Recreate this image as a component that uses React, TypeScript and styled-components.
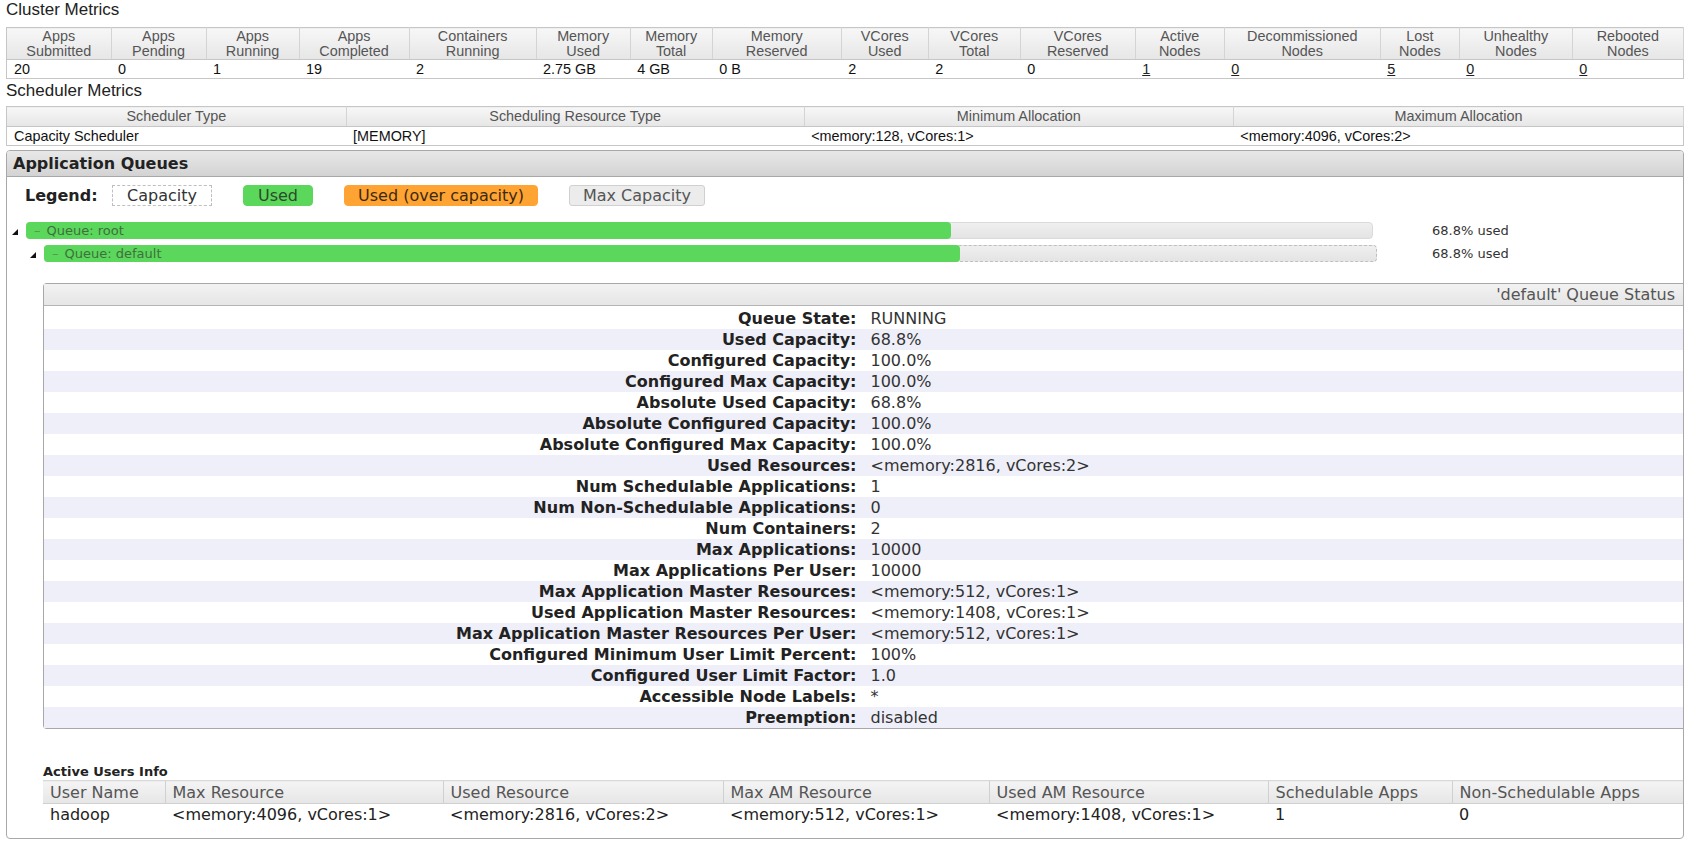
import React from 'react'
import styled, { createGlobalStyle } from 'styled-components'

const GlobalStyle = createGlobalStyle`
  html, body {
    margin: 0;
    padding: 0;
    background: #fff;
  }
  body {
    font-family: "Liberation Sans", Arial, sans-serif;
    color: #222;
  }
`

const clusterCols = [
  { h: ['Apps', 'Submitted'], v: '20', w: 104.5 },
  { h: ['Apps', 'Pending'], v: '0', w: 95 },
  { h: ['Apps', 'Running'], v: '1', w: 93 },
  { h: ['Apps', 'Completed'], v: '19', w: 110 },
  { h: ['Containers', 'Running'], v: '2', w: 127 },
  { h: ['Memory', 'Used'], v: '2.75 GB', w: 94 },
  { h: ['Memory', 'Total'], v: '4 GB', w: 82 },
  { h: ['Memory', 'Reserved'], v: '0 B', w: 129 },
  { h: ['VCores', 'Used'], v: '2', w: 87 },
  { h: ['VCores', 'Total'], v: '2', w: 92 },
  { h: ['VCores', 'Reserved'], v: '0', w: 115 },
  { h: ['Active', 'Nodes'], v: '1', w: 89, link: true },
  { h: ['Decommissioned', 'Nodes'], v: '0', w: 156, link: true },
  { h: ['Lost', 'Nodes'], v: '5', w: 79, link: true },
  { h: ['Unhealthy', 'Nodes'], v: '0', w: 113, link: true },
  { h: ['Rebooted', 'Nodes'], v: '0', w: 111, link: true },
]

const schedulerCols = [
  { h: 'Scheduler Type', v: 'Capacity Scheduler', w: 339.5 },
  { h: 'Scheduling Resource Type', v: '[MEMORY]', w: 458 },
  { h: 'Minimum Allocation', v: '<memory:128, vCores:1>', w: 429 },
  { h: 'Maximum Allocation', v: '<memory:4096, vCores:2>', w: 450 },
]

const queueStatus: [string, string][] = [
  ['Queue State:', 'RUNNING'],
  ['Used Capacity:', '68.8%'],
  ['Configured Capacity:', '100.0%'],
  ['Configured Max Capacity:', '100.0%'],
  ['Absolute Used Capacity:', '68.8%'],
  ['Absolute Configured Capacity:', '100.0%'],
  ['Absolute Configured Max Capacity:', '100.0%'],
  ['Used Resources:', '<memory:2816, vCores:2>'],
  ['Num Schedulable Applications:', '1'],
  ['Num Non-Schedulable Applications:', '0'],
  ['Num Containers:', '2'],
  ['Max Applications:', '10000'],
  ['Max Applications Per User:', '10000'],
  ['Max Application Master Resources:', '<memory:512, vCores:1>'],
  ['Used Application Master Resources:', '<memory:1408, vCores:1>'],
  ['Max Application Master Resources Per User:', '<memory:512, vCores:1>'],
  ['Configured Minimum User Limit Percent:', '100%'],
  ['Configured User Limit Factor:', '1.0'],
  ['Accessible Node Labels:', '*'],
  ['Preemption:', 'disabled'],
]

const userCols = [
  { h: 'User Name', v: 'hadoop', w: 122 },
  { h: 'Max Resource', v: '<memory:4096, vCores:1>', w: 278 },
  { h: 'Used Resource', v: '<memory:2816, vCores:2>', w: 280 },
  { h: 'Max AM Resource', v: '<memory:512, vCores:1>', w: 266 },
  { h: 'Used AM Resource', v: '<memory:1408, vCores:1>', w: 279 },
  { h: 'Schedulable Apps', v: '1', w: 184 },
  { h: 'Non-Schedulable Apps', v: '0', w: 231 },
]

const queues = [
  { name: 'root', indent: 0, width: 1347, used: 68.8, given: false },
  { name: 'default', indent: 18, width: 1333, used: 68.8, given: true },
]

const TreeArrow = () => (
  <svg width="6" height="6" viewBox="0 0 6 6">
    <polygon points="6,0 6,6 0,6" fill="#111" />
  </svg>
)

export default function App() {
  return (
    <Page>
      <GlobalStyle />
      <SectionTitle>Cluster Metrics</SectionTitle>
      <MetricsTable>
        <colgroup>
          {clusterCols.map((c, i) => (
            <col key={i} style={{ width: c.w }} />
          ))}
        </colgroup>
        <thead>
          <tr>
            {clusterCols.map((c, i) => (
              <HeadCell key={i} $tall>
                {c.h[0]}
                <br />
                {c.h[1]}
              </HeadCell>
            ))}
          </tr>
        </thead>
        <tbody>
          <tr>
            {clusterCols.map((c, i) => (
              <DataCell key={i}>{c.link ? <NodeLink>{c.v}</NodeLink> : c.v}</DataCell>
            ))}
          </tr>
        </tbody>
      </MetricsTable>

      <SectionTitle $top={2} $bottom={5}>
        Scheduler Metrics
      </SectionTitle>
      <MetricsTable>
        <colgroup>
          {schedulerCols.map((c, i) => (
            <col key={i} style={{ width: c.w }} />
          ))}
        </colgroup>
        <thead>
          <tr>
            {schedulerCols.map((c, i) => (
              <HeadCell key={i}>{c.h}</HeadCell>
            ))}
          </tr>
        </thead>
        <tbody>
          <tr>
            {schedulerCols.map((c, i) => (
              <DataCell key={i} $h={18}>
                {c.v}
              </DataCell>
            ))}
          </tr>
        </tbody>
      </MetricsTable>

      <QueuePanel>
        <PanelHeader>Application Queues</PanelHeader>
        <Legend>
          <LegendLabel>Legend:</LegendLabel>
          <LegendBox $kind="capacity" $w={100}>Capacity</LegendBox>
          <LegendBox $kind="used" $w={70}>Used</LegendBox>
          <LegendBox $kind="over" $w={194}>Used (over capacity)</LegendBox>
          <LegendBox $kind="max" $w={136}>Max Capacity</LegendBox>
        </Legend>

        <QueueTree>
          {queues.map((q) => (
            <QueueRow key={q.name}>
              <QueueLead style={{ paddingLeft: q.indent }}>
                <TreeArrow />
                <QueueBar $given={q.given} style={{ width: q.width }}>
                  <QueueUsed style={{ width: `${q.used}%` }} />
                  <QueueLabel>
                    <Dash>–</Dash>Queue: {q.name}
                  </QueueLabel>
                </QueueBar>
              </QueueLead>
              <QueueStats>{q.used}% used</QueueStats>
            </QueueRow>
          ))}
        </QueueTree>

        <StatusPanel>
          <StatusHeader>'default' Queue Status</StatusHeader>
          <StatusTable>
            <tbody>
              {queueStatus.map(([k, v], i) => (
                <StatusRow key={k} $odd={i % 2 === 1}>
                  <StatusKey>{k}</StatusKey>
                  <StatusValue>{v}</StatusValue>
                </StatusRow>
              ))}
            </tbody>
          </StatusTable>
        </StatusPanel>

        <UsersTitle>Active Users Info</UsersTitle>
        <UsersTable>
          <colgroup>
            {userCols.map((c, i) => (
              <col key={i} style={{ width: c.w }} />
            ))}
          </colgroup>
          <thead>
            <tr>
              {userCols.map((c) => (
                <UsersHead key={c.h}>{c.h}</UsersHead>
              ))}
            </tr>
          </thead>
          <tbody>
            <tr>
              {userCols.map((c) => (
                <UsersCell key={c.h}>{c.v}</UsersCell>
              ))}
            </tr>
          </tbody>
        </UsersTable>
      </QueuePanel>
    </Page>
  )
}

const tahoma = `Tahoma, "DejaVu Sans", Verdana, sans-serif`

const Page = styled.div`
  padding: 0 8px 0 6px;
`

const SectionTitle = styled.div<{ $top?: number; $bottom?: number }>`
  font-size: 17px;
  line-height: 20px;
  color: #222;
  padding-top: ${(p) => p.$top ?? 0}px;
  margin-bottom: ${(p) => p.$bottom ?? 7}px;
`

const MetricsTable = styled.table`
  width: 100%;
  table-layout: fixed;
  border-collapse: collapse;
  border: 1px solid #c6c6c6;
  font-size: 14.4px;
`

const HeadCell = styled.th<{ $tall?: boolean }>`
  height: ${(p) => (p.$tall ? 31 : 19)}px;
  padding: 0 2px;
  font-weight: normal;
  line-height: 15px;
  color: #555;
  text-align: center;
  background: linear-gradient(#f7f7f7, #e6e6e6);
  border-right: 1px solid #d4d4d4;
  border-bottom: 1px solid #c6c6c6;
  white-space: nowrap;
  overflow: hidden;
`

const DataCell = styled.td<{ $h?: number }>`
  height: ${(p) => p.$h ?? 18}px;
  padding: 0 7px;
  line-height: 16px;
  color: #111;
  white-space: nowrap;
  overflow: hidden;
`

const NodeLink = styled.span`
  color: #222;
  text-decoration: underline;
`

const QueuePanel = styled.div`
  margin-top: 4px;
  border: 1px solid #a8a8a8;
  border-radius: 4px;
  padding-bottom: 13px;
  font-family: ${tahoma};
  color: #333;
`

const PanelHeader = styled.div`
  height: 25px;
  line-height: 25px;
  padding-left: 6px;
  font-size: 16px;
  font-weight: bold;
  color: #222;
  background: linear-gradient(#e8e8e8, #d3d3d3);
  border-bottom: 1px solid #a8a8a8;
  border-radius: 3px 3px 0 0;
`

const Legend = styled.div`
  display: flex;
  align-items: center;
  margin-top: 8px;
  padding-left: 18px;
  height: 21px;
  font-size: 16px;
`

const LegendLabel = styled.span`
  font-weight: bold;
  color: #222;
  width: 87px;
`

const legendStyles = {
  capacity: 'background: #fff; border: 1px dashed #bfbfbf; color: #333;',
  used: 'background: #5bd75b; border: 1px solid #5bd75b; border-radius: 4px; color: #2c4a2c;',
  over: 'background: #ffa333; border: 1px solid #ffa333; border-radius: 4px; color: #3c2a10;',
  max: 'background: #ececec; border: 1px solid #d0d0d0; border-radius: 3px; color: #555;',
}

const LegendBox = styled.span<{ $kind: keyof typeof legendStyles; $w: number }>`
  box-sizing: border-box;
  width: ${(p) => p.$w}px;
  height: 21px;
  line-height: 19px;
  margin-right: 31px;
  text-align: center;
  white-space: nowrap;
  ${(p) => legendStyles[p.$kind]}
`

const QueueTree = styled.div`
  margin-top: 16px;
  display: flex;
  flex-direction: column;
  gap: 6px;
`

const QueueRow = styled.div`
  display: grid;
  grid-template-columns: 1425px auto;
  align-items: center;
  height: 17px;
`

const QueueLead = styled.div`
  display: flex;
  align-items: center;
  gap: 8px;
  margin-left: 5px;

  svg {
    flex: none;
    margin-top: 2px;
  }
`

const QueueBar = styled.div<{ $given: boolean }>`
  position: relative;
  box-sizing: border-box;
  height: 17px;
  background: linear-gradient(#efefef, #e4e4e4);
  border: 1px ${(p) => (p.$given ? 'dashed #bfbfbf' : 'solid #dadada')};
  border-radius: 4px;
`

const QueueUsed = styled.div`
  position: absolute;
  left: -1px;
  top: -1px;
  bottom: -1px;
  background: #5bd75b;
  border-radius: 4px;
`

const QueueLabel = styled.span`
  position: relative;
  display: block;
  padding-left: 7px;
  line-height: 15px;
  font-size: 13px;
  color: #3f6f3f;
  white-space: nowrap;
`

const Dash = styled.span`
  color: #4f9a4f;
  margin-right: 6px;
`

const QueueStats = styled.span`
  font-size: 13px;
  color: #333;
`

const StatusPanel = styled.div`
  margin: 21px 0 0 36px;
  border: 1px solid #a8a8a8;
  border-right: none;
  border-radius: 4px 0 0 4px;
`

const StatusHeader = styled.div`
  height: 21px;
  line-height: 21px;
  text-align: right;
  padding-right: 8px;
  font-size: 16px;
  color: #555;
  background: linear-gradient(#f2f2f2, #e6e6e6);
  border-bottom: 1px solid #b4b4b4;
`

const StatusTable = styled.table`
  width: 100%;
  border-collapse: collapse;
  margin-top: 2px;
  font-size: 16px;
`

const StatusRow = styled.tr<{ $odd: boolean }>`
  height: 21px;
  background: ${(p) => (p.$odd ? '#efeff9' : '#fff')};
`

const StatusKey = styled.th`
  width: 50%;
  padding: 0 7px 0 0;
  text-align: right;
  font-weight: bold;
  color: #222;
  line-height: 21px;
  white-space: nowrap;
`

const StatusValue = styled.td`
  padding: 0 0 0 7px;
  color: #333;
  line-height: 21px;
  white-space: nowrap;
`

const UsersTitle = styled.div`
  margin: 36px 0 0 36px;
  font-size: 13px;
  line-height: 14px;
  font-weight: bold;
  color: #222;
`

const UsersTable = styled.table`
  margin: 1px 0 0 36px;
  width: calc(100% - 48px);
  table-layout: fixed;
  border-collapse: collapse;
  font-size: 16px;
`

const UsersHead = styled.th`
  height: 22px;
  padding: 0 7px;
  text-align: left;
  font-weight: normal;
  color: #555;
  background: linear-gradient(#f4f4f4, #e6e6e6);
  border-top: 1px solid #d8d8d8;
  border-bottom: 1px solid #d0d0d0;
  border-left: 1px solid #d0d0d0;
  white-space: nowrap;
  overflow: hidden;

  &:first-child {
    border-left: none;
  }
`

const UsersCell = styled.td`
  height: 21px;
  padding: 0 7px;
  color: #222;
  white-space: nowrap;
  overflow: hidden;
`
